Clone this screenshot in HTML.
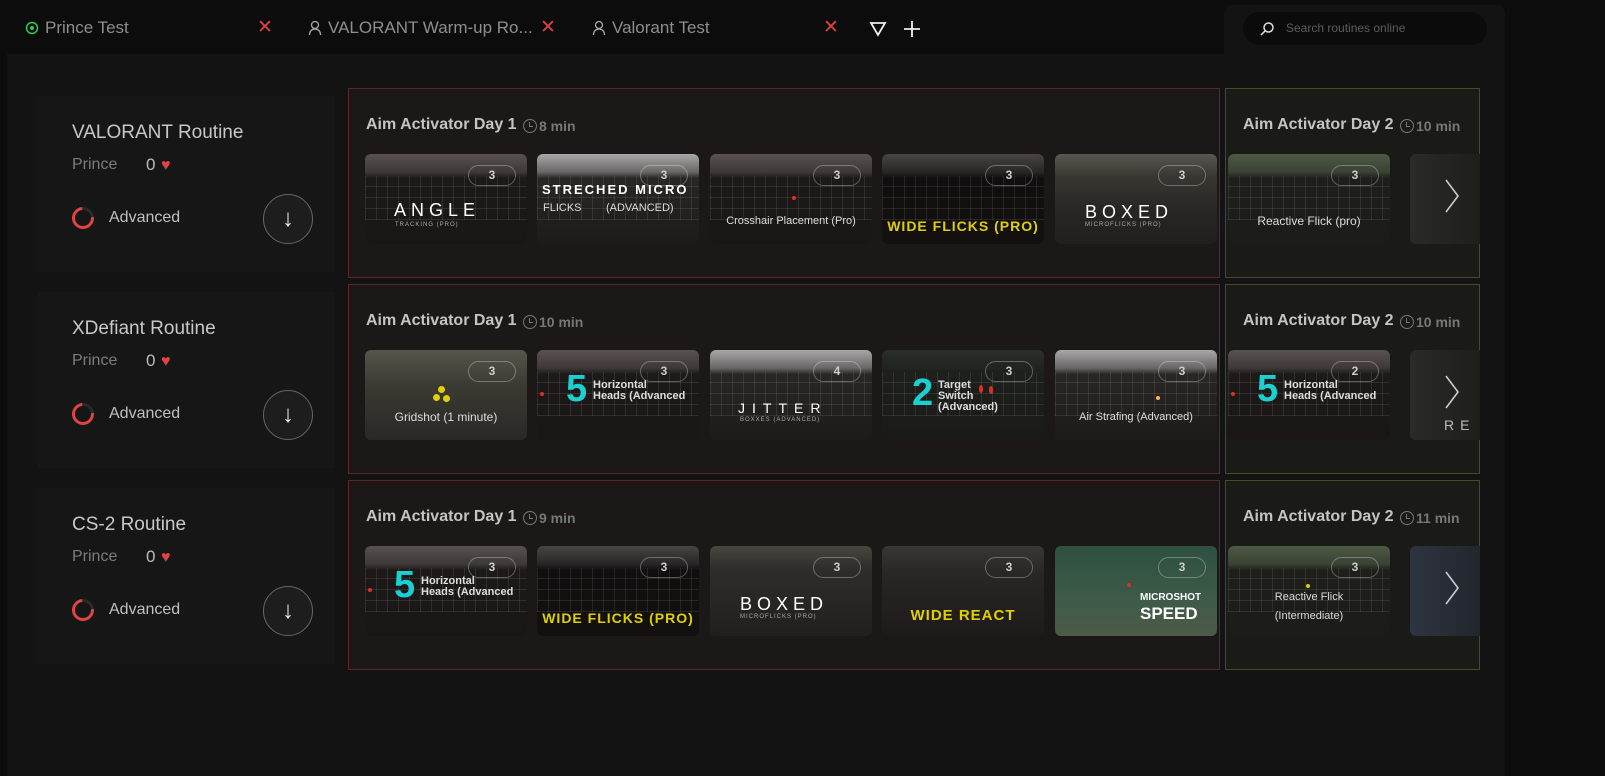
<!DOCTYPE html>
<html><head><meta charset="utf-8"><style>
*{box-sizing:border-box;margin:0;padding:0}
body{width:1605px;height:776px;background:#0c0c0c;font-family:"Liberation Sans",sans-serif;position:relative;overflow:hidden;color:#ccc}
.abs{position:absolute}
.tab{position:absolute;top:18px;font-size:17px;color:#8e8e8e;display:flex;align-items:center;gap:6px}
.x{position:absolute;top:16px;color:#e04040;font-size:19px}
.main{position:absolute;left:7px;top:54px;width:1498px;height:722px;background:#131313}
.search{position:absolute;left:1224px;top:5px;width:281px;height:100px;background:#131313;border-radius:8px}
.sbox{position:absolute;left:1243px;top:12px;width:244px;height:33px;border-radius:17px;background:#0b0b0b;color:#5c5c5c;font-size:12px;line-height:33px;padding-left:43px}
.row{position:absolute;left:0;width:1605px;height:196px}
.card{position:absolute;left:38px;top:8px;width:297px;height:176px;background:#161616}
.card h2{position:absolute;left:34px;top:26px;font-size:19px;color:#c8c8c8;font-weight:normal}
.prince{position:absolute;left:34px;top:60px;font-size:16px;color:#7c7c7c}
.zero{position:absolute;left:108px;top:59px;font-size:17px;color:#bbb}
.heart{position:absolute;left:123px;top:61px;color:#e04444;font-size:16px}
.adv{position:absolute;left:71px;top:113px;font-size:16px;color:#c0c0c0}
.spin{position:absolute;left:34px;top:111px;width:22px;height:22px;border-radius:50%;border:3px solid #e04444;border-top-color:#2a2a2a;transform:rotate(40deg)}
.dl{position:absolute;left:225px;top:98px;width:50px;height:50px;border-radius:50%;border:1px solid #666;background:#1d1d1d;color:#eee;text-align:center;line-height:48px;font-size:24px}
.red{position:absolute;left:348px;top:0;width:872px;height:190px;border:1px solid #5a2626;background:#1c1818}
.grn{position:absolute;left:1225px;top:0;width:255px;height:190px;border:1px solid #4a4a22;background:#1a1b17;overflow:hidden}
.ttl{position:absolute;top:28px;font-size:16px;color:#c4c4c4;font-weight:bold}
.min{position:absolute;top:30px;font-size:14px;color:#777;font-weight:bold}
.clk{display:inline-block;width:14px;height:14px;border:1.5px solid #777;border-radius:50%;vertical-align:-2px;margin-right:2px;position:relative}
.clk:after{content:"";position:absolute;left:5px;top:2px;width:3px;height:4px;border-left:1.5px solid #777;border-bottom:1.5px solid #777}
.t{position:absolute;top:66px;width:162px;height:90px;border-radius:6px;overflow:hidden;background:linear-gradient(#5a5252 0,#3e3838 20%,#1d1919 27%,#1a1616 100%)}
.t .g{position:absolute;left:0;right:0;top:22px;height:44px;background-image:repeating-linear-gradient(90deg,rgba(255,255,255,.09) 0 1px,transparent 1px 11px),repeating-linear-gradient(0deg,rgba(255,255,255,.09) 0 1px,transparent 1px 11px)}
.b{position:absolute;left:103px;top:11px;width:48px;height:21px;border:1px solid rgba(255,255,255,.3);border-radius:11px;color:#ccc;font-size:12px;text-align:center;line-height:19px;font-weight:bold}
.lb{position:absolute;left:0;right:0;text-align:center;color:#ddd;font-size:12px}
.big{position:absolute;color:#fff;letter-spacing:5px;font-size:18px}
.sm{position:absolute;color:#aaa;font-size:6px;letter-spacing:1px}
.yel{position:absolute;left:0;right:0;text-align:center;color:#e0d000;font-size:14px;font-weight:bold;letter-spacing:1px}
.five{position:absolute;color:#1ad0d0;font-size:38px;font-weight:bold;top:18px}
.hh{position:absolute;color:#ddd;font-size:11px;line-height:11px;font-weight:bold}
.dot{position:absolute;width:4px;height:4px;border-radius:50%;background:#e03020}
.arr{position:absolute;left:1410px;top:66px;width:70px;height:90px;border-radius:6px 0 0 6px;background:linear-gradient(90deg,#2a2a27,#1e1e1b)}
.arr svg{position:absolute;left:34px;top:24px}
.tg{background:linear-gradient(#4e5a46 0,#3a4234 20%,#1e1f1a 27%,#1b1c18 100%)}
.tl{background:linear-gradient(#a8a8a8 0,#6a6666 20%,#2a2626 27%,#1e1a1a 100%)}
</style></head><body>
<div class="main"></div>
<div class="search"></div>
<div class="sbox">Search routines online</div>
<svg class="abs" style="left:1259px;top:21px" width="16" height="16" viewBox="0 0 16 16"><circle cx="9.5" cy="6.5" r="4.5" fill="none" stroke="#ddd" stroke-width="1.5"/><path d="M6.3 9.7L2 14" stroke="#ddd" stroke-width="1.5"/></svg>

<div class="tab" style="left:25px"><svg width="14" height="14"><circle cx="7" cy="7" r="5.5" fill="none" stroke="#2ecc50" stroke-width="1.5"/><circle cx="7" cy="7" r="2" fill="#2ecc50"/></svg>Prince Test</div>
<div class="x" style="left:257px">✕</div>
<div class="tab" style="left:308px"><svg width="14" height="16"><circle cx="7" cy="5" r="3.5" fill="none" stroke="#aaa" stroke-width="1.3"/><path d="M1.5 15c0-4 2.5-6 5.5-6s5.5 2 5.5 6" fill="none" stroke="#aaa" stroke-width="1.3"/></svg>VALORANT Warm-up Ro...</div>
<div class="x" style="left:540px">✕</div>
<div class="tab" style="left:592px"><svg width="14" height="16"><circle cx="7" cy="5" r="3.5" fill="none" stroke="#aaa" stroke-width="1.3"/><path d="M1.5 15c0-4 2.5-6 5.5-6s5.5 2 5.5 6" fill="none" stroke="#aaa" stroke-width="1.3"/></svg>Valorant Test</div>
<div class="x" style="left:823px">✕</div>
<svg class="abs" style="left:869px;top:21px" width="18" height="16"><path d="M2 2h14L9 14z" fill="none" stroke="#eee" stroke-width="1.8"/></svg>
<svg class="abs" style="left:903px;top:20px" width="18" height="18"><path d="M9 1v16M1 9h16" stroke="#eee" stroke-width="1.8"/></svg>

<!-- ROW 1 -->
<div class="row" style="top:88px">
<div class="card"><h2>VALORANT Routine</h2><div class="prince">Prince</div><div class="zero">0</div><div class="heart">♥</div><div class="spin"></div><div class="adv">Advanced</div><div class="dl">↓</div></div>
<div class="red"></div><div class="grn"></div>
<div class="ttl" style="left:366px">Aim Activator Day 1</div><div class="min" style="left:523px"><span class="clk"></span>8 min</div>
<div class="ttl" style="left:1243px">Aim Activator Day 2</div><div class="min" style="left:1400px"><span class="clk"></span>10 min</div>
<div class="t" style="left:365px"><div class="g"></div><div class="b">3</div><div class="big" style="left:29px;top:46px">ANGLE</div><div class="sm" style="left:30px;top:68px">TRACKING (PRO)</div></div>
<div class="t tl" style="left:537px"><div class="g"></div><div class="b">3</div><div class="big" style="left:5px;top:28px;font-size:13px;letter-spacing:2px;font-weight:bold">STRECHED MICRO</div><div class="lb" style="top:48px;font-size:11px;text-align:left;left:6px">FLICKS &nbsp;&nbsp;&nbsp;&nbsp;&nbsp;&nbsp;&nbsp;(ADVANCED)</div></div>
<div class="t" style="left:710px"><div class="g"></div><div class="b">3</div><div class="dot" style="left:82px;top:42px"></div><div class="lb" style="top:61px;font-size:11px">Crosshair Placement (Pro)</div></div>
<div class="t" style="left:882px;background:linear-gradient(#4a4444 0,#2a2626 20%,#100e0e 27%,#141010 100%)"><div class="g"></div><div class="b">3</div><div class="yel" style="top:64px">WIDE FLICKS (PRO)</div></div>
<div class="t" style="left:1055px;background:linear-gradient(#5a5650 0,#3a3632 25%,#2a2624 60%,#221e1e 100%)"><div class="b">3</div><div class="big" style="left:30px;top:48px">BOXED</div><div class="sm" style="left:30px;top:68px">MICROFLICKS (PRO)</div></div>
<div class="t tg" style="left:1228px"><div class="g"></div><div class="b">3</div><div class="lb" style="top:60px;font-size:12px">Reactive Flick (pro)</div></div>
<div class="arr"><svg width="16" height="36"><path d="M2 2l12 16L2 34" fill="none" stroke="#ccc" stroke-width="1.6"/></svg></div>
</div>

<!-- ROW 2 -->
<div class="row" style="top:284px">
<div class="card"><h2>XDefiant Routine</h2><div class="prince">Prince</div><div class="zero">0</div><div class="heart">♥</div><div class="spin"></div><div class="adv">Advanced</div><div class="dl">↓</div></div>
<div class="red"></div><div class="grn"></div>
<div class="ttl" style="left:366px">Aim Activator Day 1</div><div class="min" style="left:523px"><span class="clk"></span>10 min</div>
<div class="ttl" style="left:1243px">Aim Activator Day 2</div><div class="min" style="left:1400px"><span class="clk"></span>10 min</div>
<div class="t" style="left:365px;background:linear-gradient(#55554a,#3a3a32 40%,#2a2826 100%)"><div class="b">3</div><div class="abs" style="left:73px;top:36px;width:7px;height:7px;border-radius:50%;background:#e0d000"></div><div class="abs" style="left:68px;top:44px;width:7px;height:7px;border-radius:50%;background:#e0d000"></div><div class="abs" style="left:78px;top:45px;width:7px;height:7px;border-radius:50%;background:#e0d000"></div><div class="lb" style="top:60px;font-size:12px">Gridshot (1 minute)</div></div>
<div class="t" style="left:537px"><div class="g"></div><div class="b">3</div><div class="dot" style="left:3px;top:42px"></div><div class="five" style="left:29px">5</div><div class="hh" style="left:56px;top:30px">Horizontal<br>Heads (Advanced</div></div>
<div class="t tl" style="left:710px"><div class="g"></div><div class="b">4</div><div class="big" style="left:28px;top:50px;font-size:14px;letter-spacing:7px">JITTER</div><div class="sm" style="left:30px;top:67px">BOXXES (ADVANCED)</div></div>
<div class="t" style="left:882px;background:linear-gradient(#2a302a,#1e201c 25%,#1a1a18 100%)"><div class="g"></div><div class="b">3</div><div class="five" style="left:30px;top:22px">2</div><div class="hh" style="left:56px;top:30px">Target<br>Switch<br>(Advanced)</div><div class="dot" style="left:97px;top:35px;height:8px"></div><div class="dot" style="left:107px;top:36px;height:8px"></div></div>
<div class="t tl" style="left:1055px"><div class="g"></div><div class="b">3</div><div class="dot" style="left:101px;top:46px;background:#ffb060"></div><div class="lb" style="top:61px;font-size:11px">Air Strafing (Advanced)</div></div>
<div class="t" style="left:1228px"><div class="g"></div><div class="b">2</div><div class="dot" style="left:3px;top:42px"></div><div class="five" style="left:29px">5</div><div class="hh" style="left:56px;top:30px">Horizontal<br>Heads (Advanced</div></div>
<div class="arr"><svg width="16" height="36"><path d="M2 2l12 16L2 34" fill="none" stroke="#ccc" stroke-width="1.6"/></svg><span class="abs" style="left:34px;top:68px;font-size:14px;line-height:14px;letter-spacing:6px;color:#bbb">RE</span></div>
</div>

<!-- ROW 3 -->
<div class="row" style="top:480px">
<div class="card"><h2>CS-2 Routine</h2><div class="prince">Prince</div><div class="zero">0</div><div class="heart">♥</div><div class="spin"></div><div class="adv">Advanced</div><div class="dl">↓</div></div>
<div class="red"></div><div class="grn"></div>
<div class="ttl" style="left:366px">Aim Activator Day 1</div><div class="min" style="left:523px"><span class="clk"></span>9 min</div>
<div class="ttl" style="left:1243px">Aim Activator Day 2</div><div class="min" style="left:1400px"><span class="clk"></span>11 min</div>
<div class="t" style="left:365px"><div class="g"></div><div class="b">3</div><div class="dot" style="left:3px;top:42px"></div><div class="five" style="left:29px">5</div><div class="hh" style="left:56px;top:30px">Horizontal<br>Heads (Advanced</div></div>
<div class="t" style="left:537px;background:linear-gradient(#4a4444 0,#2a2626 20%,#100e0e 27%,#141010 100%)"><div class="g"></div><div class="b">3</div><div class="yel" style="top:64px">WIDE FLICKS (PRO)</div></div>
<div class="t" style="left:710px;background:linear-gradient(#4a4640 0,#302c2a 25%,#221e1e 100%)"><div class="b">3</div><div class="big" style="left:30px;top:48px">BOXED</div><div class="sm" style="left:30px;top:68px">MICROFLICKS (PRO)</div></div>
<div class="t" style="left:882px;background:linear-gradient(#3a3636,#2a2626 30%,#1e1a1a 100%)"><div class="b">3</div><div class="yel" style="top:61px;font-size:15px">WIDE REACT</div></div>
<div class="t" style="left:1055px;background:linear-gradient(#2e5040,#3e5a48 60%,#4e5a48 100%)"><div class="b">3</div><div class="dot" style="left:72px;top:37px"></div><div class="abs" style="left:85px;top:46px;color:#fff;font-weight:bold;font-size:10px">MICROSHOT</div><div class="abs" style="left:85px;top:58px;color:#fff;font-weight:bold;font-size:17px">SPEED</div></div>
<div class="t tg" style="left:1228px"><div class="g"></div><div class="b">3</div><div class="dot" style="left:78px;top:38px;background:#e0d000"></div><div class="lb" style="top:42px;font-size:11px;line-height:19px">Reactive Flick<br>(Intermediate)</div></div>
<div class="arr" style="background:linear-gradient(90deg,#2e3440,#22262c)"><svg width="16" height="36"><path d="M2 2l12 16L2 34" fill="none" stroke="#ccc" stroke-width="1.6"/></svg></div>
</div>
</body></html>
